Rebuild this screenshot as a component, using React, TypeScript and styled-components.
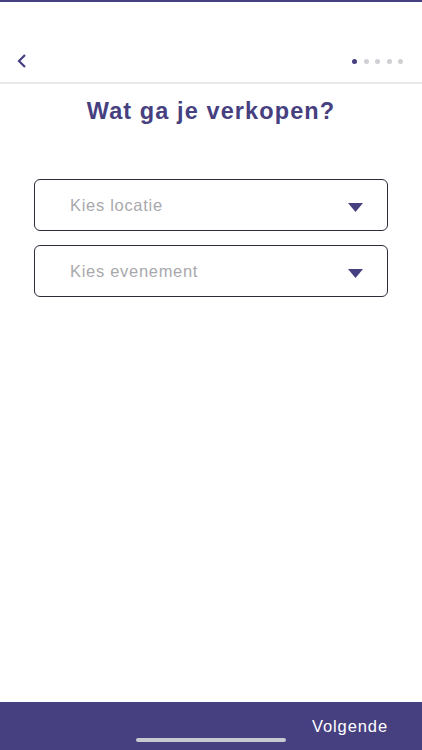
import styled, { createGlobalStyle } from 'styled-components';

const GlobalStyle = createGlobalStyle`
    html, body {
        margin: 0;
        padding: 0;
        background: #fff;
        font-family: "Liberation Sans", Arial, sans-serif;
    }
`;

const Screen = styled.div`
    width: 422px;
    height: 750px;
    display: flex;
    flex-direction: column;
    border-top: 2px solid #463f80;
    box-sizing: border-box;
    position: relative;
    overflow: hidden;
`;

const Header = styled.div`
    height: 82px;
    display: flex;
    align-items: flex-end;
    justify-content: space-between;
    padding: 0 19px 13px 17px;
    box-sizing: border-box;
    border-bottom: 2px solid #e9e9ec;
`;

const BackButton = styled.button`
    border: none;
    background: none;
    padding: 0;
    width: 14px;
    height: 16px;
    display: flex;
    align-items: center;
    cursor: pointer;
`;

const Steps = styled.div`
    display: flex;
    gap: 6.5px;
    margin-bottom: 5px;
`;

const Dot = styled.span<{ $active?: boolean }>`
    width: 5px;
    height: 5px;
    border-radius: 50%;
    background: ${(p) => (p.$active ? '#463f80' : '#cfcfd4')};
`;

const Title = styled.h1`
    margin: 14px 0 0;
    text-align: center;
    font-family: "Liberation Sans", Arial, sans-serif;
    font-size: 23.5px;
    font-weight: 700;
    color: #463f80;
    letter-spacing: 1.1px;
`;

const Form = styled.div`
    display: flex;
    flex-direction: column;
    gap: 14px;
    padding: 0 34px;
    margin-top: 54px;
    flex: 1;
`;

const Select = styled.div`
    height: 52px;
    border: 1.5px solid #2e2b3a;
    border-radius: 6px;
    display: flex;
    align-items: center;
    justify-content: space-between;
    padding: 0 24px 0 35px;
    box-sizing: border-box;
`;

const Placeholder = styled.span`
    font-size: 16.5px;
    color: #a9a9ad;
    letter-spacing: 0.7px;
`;

const CaretBox = styled.span`
    display: flex;
    margin-top: 4px;
`;

const Footer = styled.div`
    height: 48px;
    background: #463f80;
    display: flex;
    align-items: flex-start;
    justify-content: flex-end;
    padding: 15px 34px 0 0;
    box-sizing: border-box;
`;

const NextButton = styled.button`
    border: none;
    background: none;
    padding: 0;
    color: #fff;
    font-family: "Liberation Sans", Arial, sans-serif;
    font-size: 16.5px;
    letter-spacing: 0.9px;
    cursor: pointer;
`;

const HomeIndicator = styled.div`
    position: absolute;
    left: 136px;
    bottom: 8px;
    width: 150px;
    height: 4px;
    border-radius: 2px;
    background: #c9c9d2;
`;

const Caret = () => (
    <CaretBox>
        <svg width="15" height="9" viewBox="0 0 15 9">
            <path d="M0 0 H15 L7.5 9 Z" fill="#463f80" />
        </svg>
    </CaretBox>
);

const steps = [true, false, false, false, false];

export default function App() {
    return (
        <>
            <GlobalStyle />
            <Screen>
                <Header>
                    <BackButton aria-label="Terug">
                        <svg width="10" height="14" viewBox="0 0 10 14">
                            <path d="M8 1 L2 7 L8 13" stroke="#463f80" strokeWidth="2.2" fill="none" />
                        </svg>
                    </BackButton>
                    <Steps>
                        {steps.map((active, i) => (
                            <Dot key={i} $active={active} />
                        ))}
                    </Steps>
                </Header>
                <Title>Wat ga je verkopen?</Title>
                <Form>
                    <Select>
                        <Placeholder>Kies locatie</Placeholder>
                        <Caret />
                    </Select>
                    <Select>
                        <Placeholder>Kies evenement</Placeholder>
                        <Caret />
                    </Select>
                </Form>
                <Footer>
                    <NextButton>Volgende</NextButton>
                </Footer>
                <HomeIndicator />
            </Screen>
        </>
    );
}
